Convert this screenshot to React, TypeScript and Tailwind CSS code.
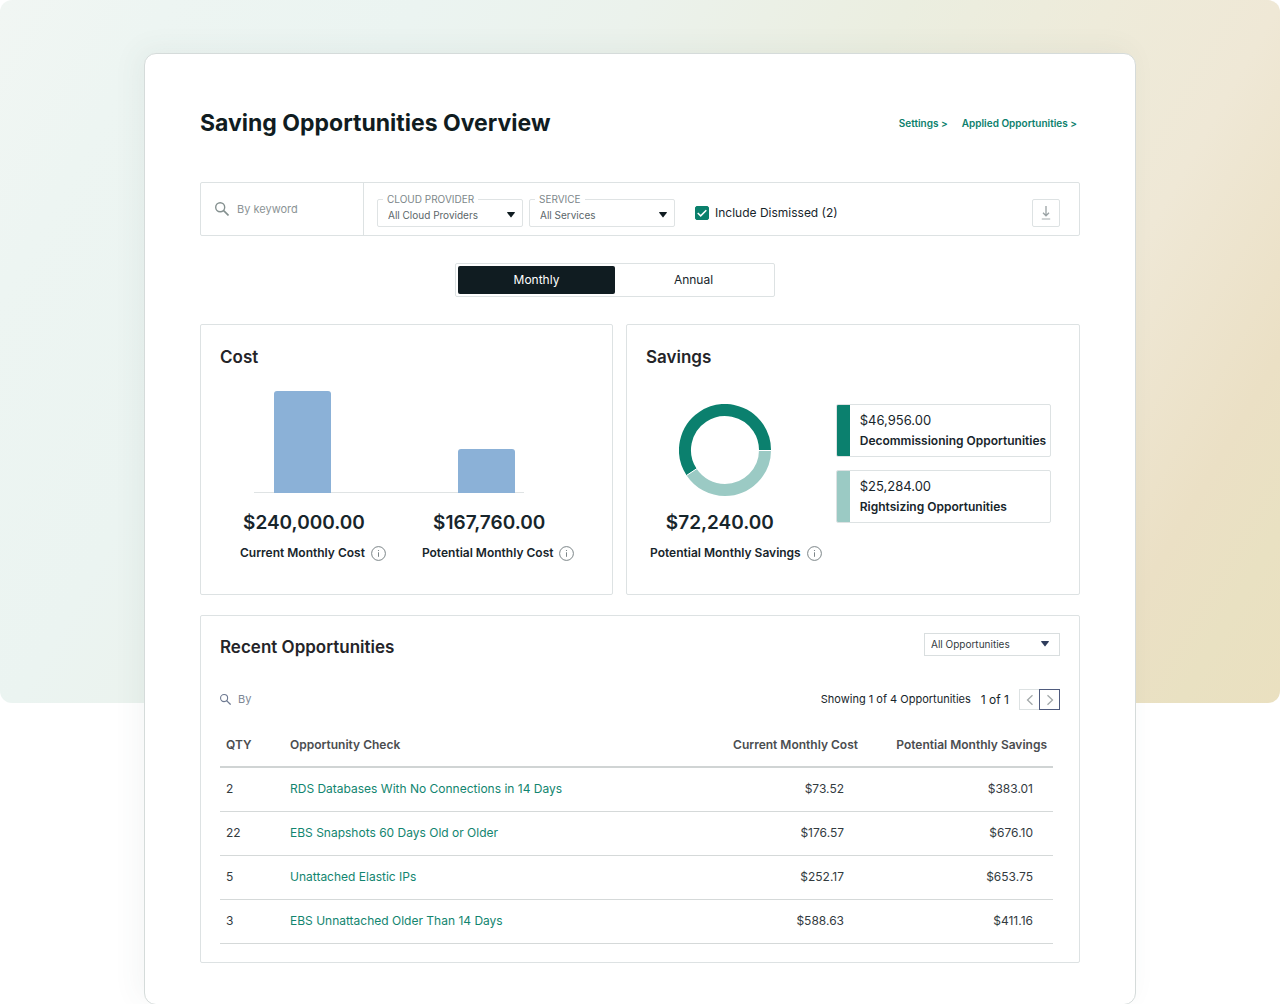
import { useState } from "react";

interface IOpportunity {
  qty: number;
  check: string;
  cost: string;
  savings: string;
}

const opportunities: IOpportunity[] = [
  { qty: 2, check: "RDS Databases With No Connections in 14 Days", cost: "$73.52", savings: "$383.01" },
  { qty: 22, check: "EBS Snapshots 60 Days Old or Older", cost: "$176.57", savings: "$676.10" },
  { qty: 5, check: "Unattached Elastic IPs", cost: "$252.17", savings: "$653.75" },
  { qty: 3, check: "EBS Unnattached Older Than 14 Days", cost: "$588.63", savings: "$411.16" },
];

const SearchIcon = ({ className }: { className: string }) => (
  <svg viewBox="0 0 14 14" fill="none" stroke="currentColor" className={className} aria-hidden="true">
    <circle cx="5.2" cy="5.2" r="4.5" strokeWidth="1.4" />
    <path d="M8.4 8.4 13.5 13.5" strokeWidth="1.6" />
  </svg>
);

const Caret = ({ className }: { className: string }) => (
  <svg viewBox="0 0 8 6" fill="currentColor" className={`pointer-events-none h-1.5 w-2 ${className}`} aria-hidden="true">
    <path d="M.6 0H7.4Q8.2.2 7.8.8L4.5 5.1Q4 5.7 3.5 5.1L.2.8Q-.2.2.6 0Z" />
  </svg>
);

const InfoIcon = () => (
  <svg viewBox="0 0 15 15" fill="none" stroke="#6d777b" className="size-[15px] shrink-0" aria-hidden="true">
    <circle cx="7.5" cy="7.5" r="6.9" strokeWidth="0.9" />
    <path d="M7.5 6.3V10.8" strokeWidth="0.9" />
    <circle cx="7.5" cy="4.5" r="0.6" fill="#6d777b" stroke="none" />
  </svg>
);

interface IFilterSelect {
  id: string;
  label: string;
  value: string;
}

const FilterSelect = ({ id, label, value }: IFilterSelect) => (
  <div className="relative">
    <select
      id={id}
      className="block h-7 w-[146px] appearance-none rounded-xs border border-[#dfe3e4] bg-white pt-1 pl-2.5 text-[10px] text-[#5b6669]"
    >
      <option>{value}</option>
    </select>
    <label htmlFor={id} className="absolute -top-2 left-1.5 bg-white px-1 text-[10px] leading-4 text-[#7d878a]">
      {label}
    </label>
    <Caret className="absolute top-[13px] right-2 text-[#101c21]" />
  </div>
);

interface IMetric {
  amount: string;
  label: string;
  amountClassName: string;
}

const Metric = ({ amount, label, amountClassName }: IMetric) => (
  <div>
    <p className={`text-center text-[19px] leading-6 font-semibold ${amountClassName}`}>{amount}</p>
    <p className="mt-2.5 flex items-center gap-1.5 text-xs leading-4 font-semibold whitespace-nowrap">
      {label}
      <InfoIcon />
    </p>
  </div>
);

interface IBreakdown {
  amount: string;
  label: string;
  color: string;
}

const Breakdown = ({ amount, label, color }: IBreakdown) => (
  <div className="flex h-[53px] w-[215px] overflow-hidden rounded-xs border border-[#dde2e3]">
    <div className={`-my-px -ml-px w-3.5 ${color}`} />
    <div className="pt-1.5 pl-2.5 whitespace-nowrap">
      <p className="text-[13px] leading-[18px]">{amount}</p>
      <p className="mt-[3px] text-xs leading-[18px] font-semibold">{label}</p>
    </div>
  </div>
);

const panel = "rounded-xs border border-[#dde2e3]";

const App = () => {
  const [period, setPeriod] = useState("Monthly");

  return (
    <div className="grid min-h-screen bg-white font-[Inter,sans-serif] text-[#17252b]">
      <div className="col-start-1 row-start-1 h-[70vh] rounded-xl bg-[linear-gradient(120deg,#f1f6f3_0%,#edf5f2_10%,#ebf4f1_25%,#ebf2ec_38%,#ebeee0_54%,#eeebda_66%,#efe8d6_76%,#ebe0c5_88%,#e9e1c2_94%,#eae0c0_100%)]" />
      <main className="relative col-start-1 row-start-1 mx-36 mt-[53px] self-start rounded-xl border border-[#d5dbda] bg-white px-[55px] pt-[53px] pb-[41px] shadow-[-6px_-4px_28px_rgba(60,90,80,0.06)]">
        <header className="flex items-center justify-between">
          <h1 className="text-[23px] leading-8 font-bold text-[#101c21]">Saving Opportunities Overview</h1>
          <nav className="mr-[3px] flex gap-3.5 text-[10px] font-semibold text-[#0b806c]">
            <a href="#settings">Settings &gt;</a>
            <a href="#applied">Applied Opportunities &gt;</a>
          </nav>
        </header>

        <section className={`mt-[43px] flex h-[54px] ${panel}`}>
          <div className="flex w-[163px] items-center gap-2 border-r border-[#dde2e3] pl-3.5 text-[#84908f]">
            <SearchIcon className="size-3.5" />
            <input
              type="search"
              aria-label="By keyword"
              placeholder="By keyword"
              className="w-28 text-[11px] outline-none placeholder:text-[#8c9496]"
            />
          </div>
          <div className="flex grow items-center gap-1.5 pt-2 pr-[19px] pl-[13px]">
            <FilterSelect id="provider" label="CLOUD PROVIDER" value="All Cloud Providers" />
            <FilterSelect id="service" label="SERVICE" value="All Services" />
            <label className="ml-3.5 flex items-center gap-1.5 text-xs">
              <span className="grid">
                <input type="checkbox" defaultChecked className="peer col-start-1 row-start-1 size-3.5 appearance-none rounded-xs border border-[#0b806c] checked:bg-[#0b806c]" />
                <svg viewBox="0 0 14 14" fill="none" stroke="white" strokeWidth="1.5" className="pointer-events-none invisible col-start-1 row-start-1 size-3.5 peer-checked:visible" aria-hidden="true">
                  <path d="M2.7 7 5.7 9.9 11.3 4.2" />
                </svg>
              </span>
              Include Dismissed (2)
            </label>
            <button type="button" aria-label="Download" className="ml-auto flex size-7 items-center justify-center rounded-xs border border-[#dde2e3]">
              <svg viewBox="0 0 10 14" fill="none" stroke="#9aa2a4" className="h-3.5 w-2.5" aria-hidden="true">
                <path d="M5 0V9.5M2 6.8 5 9.8 8 6.8" strokeWidth="1.3" />
                <path d="M.8 13H9.2" strokeWidth="0.9" />
              </svg>
            </button>
          </div>
        </section>

        <div className="mt-[27px] flex justify-center pr-[50px]">
          <div className={`flex h-[34px] w-80 p-0.5 ${panel}`}>
            {["Monthly", "Annual"].map((name) => (
              <button
                key={name}
                type="button"
                aria-pressed={period === name}
                onClick={() => setPeriod(name)}
                className="grow basis-0 rounded-xs text-xs aria-pressed:bg-[#101c21] aria-pressed:text-white"
              >
                {name}
              </button>
            ))}
          </div>
        </div>

        <div className="mt-[27px] grid grid-cols-[413fr_454fr] gap-[13px]">
          <section className={`h-[271px] px-[19px] pt-5 ${panel}`}>
            <h2 className="text-[17px] leading-6 font-semibold text-[#242428]">Cost</h2>
            <svg viewBox="0 0 270 103" className="mt-[21px] ml-[34px] h-[103px] w-[270px]" role="img" aria-label="Current and potential cost">
              <path d="M0 102.5H270" stroke="#dfe3e4" />
              <path d="M20 103V4Q20 1 23 1H74Q77 1 77 4V103Z" fill="#8bb1d7" />
              <path d="M204 103V62Q204 59 207 59H258Q261 59 261 62V103Z" fill="#8bb1d7" />
            </svg>
            <div className="mt-[18px] ml-5 flex gap-9">
              <Metric amount="$240,000.00" label="Current Monthly Cost" amountClassName="pr-[18px]" />
              <Metric amount="$167,760.00" label="Potential Monthly Cost" amountClassName="pr-[18px]" />
            </div>
          </section>

          <section className={`h-[271px] px-[19px] pt-5 ${panel}`}>
            <h2 className="text-[17px] leading-6 font-semibold text-[#242428]">Savings</h2>
            <div className="flex pl-1">
              <div className="pt-[35px]">
                <svg viewBox="0 0 92 92" fill="none" className="mb-[15px] ml-[29px] size-[92px]" role="img" aria-label="Savings split">
                  <circle cx="46" cy="46" r="40" stroke="#0b806e" strokeWidth="12" pathLength="360" strokeDasharray="213.5 360" transform="rotate(-213.5 46 46)" />
                  <circle cx="46" cy="46" r="40" stroke="#9bcac4" strokeWidth="12" pathLength="360" strokeDasharray="146.5 360" />
                  <path d="M46 46.5H92M46 46 7.6 71.4" stroke="white" />
                </svg>
                <Metric amount="$72,240.00" label="Potential Monthly Savings" amountClassName="pr-8" />
              </div>
              <div className="mt-[35px] ml-3.5 flex flex-col gap-[13px]">
                <Breakdown amount="$46,956.00" label="Decommissioning Opportunities" color="bg-[#0b806e]" />
                <Breakdown amount="$25,284.00" label="Rightsizing Opportunities" color="bg-[#9bcac4]" />
              </div>
            </div>
          </section>
        </div>

        <section className={`mt-5 px-[19px] pt-[17px] pb-[18px] ${panel}`}>
          <div className="flex justify-between">
            <h2 className="text-[17px] leading-7 font-semibold text-[#242428]">Recent Opportunities</h2>
            <div className="relative">
              <select aria-label="Opportunity type" className="block h-[23px] w-[136px] appearance-none border border-[#d9dedf] bg-white pl-1.5 text-[10px] text-[#333b3f]">
                <option>All Opportunities</option>
              </select>
              <Caret className="absolute top-2 right-[11px] text-[#2f3d5c]" />
            </div>
          </div>

          <div className="mt-7 flex items-center">
            <div className="flex grow items-center gap-[7px] text-[#6c7890]">
              <SearchIcon className="size-[11px]" />
              <input type="search" aria-label="Search opportunities" placeholder="By" className="w-40 text-[11px] outline-none placeholder:text-[#7d8794]" />
            </div>
            <p className="text-[11px]">Showing 1 of 4 Opportunities</p>
            <p className="mx-2.5 text-xs">1 of 1</p>
            <button type="button" aria-label="Previous page" className="flex h-[21px] w-5 items-center justify-center border border-r-0 border-[#dde2e3]">
              <svg viewBox="0 0 8 12" fill="none" stroke="#a3a9aa" strokeWidth="1.3" className="h-3 w-2" aria-hidden="true">
                <path d="M6.5 1.2 1.5 6 6.5 10.8" />
              </svg>
            </button>
            <button type="button" aria-label="Next page" className="flex h-[21px] w-[21px] items-center justify-center border border-[#4f5b7d]">
              <svg viewBox="0 0 8 12" fill="none" stroke="#a3a9aa" strokeWidth="1.3" className="h-3 w-2" aria-hidden="true">
                <path d="M1.5 1.2 6.5 6 1.5 10.8" />
              </svg>
            </button>
          </div>

          <div className="mt-[13px] pr-[7px]">
            <table className="w-full text-xs text-[#333b3f]">
              <thead>
                <tr className="h-11 border-b-2 border-[#d0d4d4] text-[#4b4d50]">
                  <th className="w-[70px] pl-1.5 text-left font-semibold">QTY</th>
                  <th className="text-left font-semibold">Opportunity Check</th>
                  <th className="w-40 text-right font-semibold">Current Monthly Cost</th>
                  <th className="w-[195px] pr-1.5 text-right font-semibold">Potential Monthly Savings</th>
                </tr>
              </thead>
              <tbody>
                {opportunities.map((item) => (
                  <tr key={item.check} className="h-11 border-b border-[#d5d9d9]">
                    <td className="pl-1.5">{item.qty}</td>
                    <td>
                      <a href="#opportunity" className="text-[#12856f]">{item.check}</a>
                    </td>
                    <td className="pr-3.5 text-right">{item.cost}</td>
                    <td className="pr-5 text-right">{item.savings}</td>
                  </tr>
                ))}
              </tbody>
            </table>
          </div>
        </section>
      </main>
    </div>
  );
};

export default App;
